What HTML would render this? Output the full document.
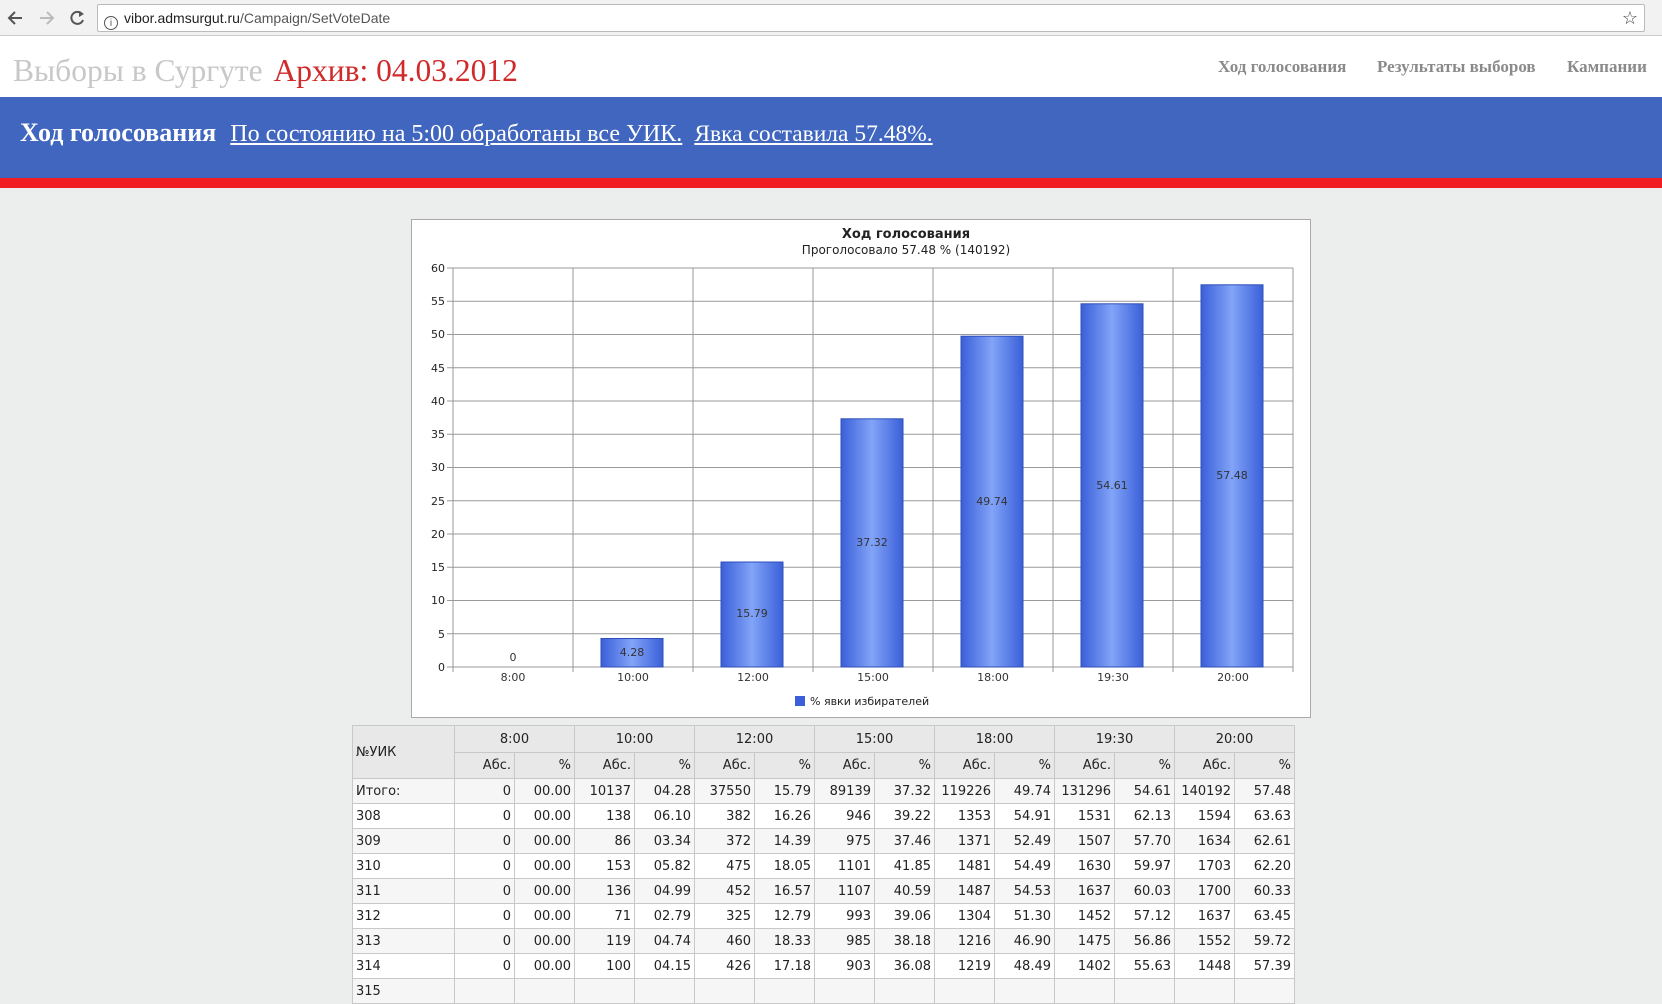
<!DOCTYPE html>
<html><head><meta charset="utf-8"><style>
body{margin:0;width:1662px;height:980px;overflow:hidden;background:#eceeee;font-family:"Liberation Sans",sans-serif;position:relative}
.bar{position:absolute;left:0;top:0;width:1662px;height:35px;background:#f2f2f2;border-bottom:1px solid #ccc}
.addr{position:absolute;left:97px;top:4px;width:1546px;height:26px;background:#fff;border:1px solid #bbb;border-radius:2px;font-size:14px;line-height:26px;color:#555}
.hdr{position:absolute;left:0;top:36px;width:1662px;height:61px;background:#fff}
.t1{position:absolute;left:13px;top:53px;font:31.5px "Liberation Serif",serif;color:#c8c8c8;white-space:nowrap}
.t1 span{color:#d02a2a;margin-left:3px}
.nav{position:absolute;top:57px;font:bold 17px "Liberation Serif",serif;color:#8a8a8a}
.blue{position:absolute;left:0;top:97px;width:1662px;height:81px;background:#4066c0}
.red{position:absolute;left:0;top:178px;width:1662px;height:10px;background:#f21d22}
.bt{position:absolute;left:20px;top:118px;color:#fff;font:24px "Liberation Serif",serif;white-space:nowrap}
.bt b{font-size:26px;margin-right:8px}
.bt u{margin-right:6px}
.chart{position:absolute;left:411px;top:219px;width:898px;height:497px;background:#fff;border:1px solid #aaa}
table{position:absolute;left:352px;top:725px;border-collapse:collapse;font:13px "DejaVu Sans",sans-serif;color:#222;table-layout:fixed}
td{border:1px solid #c8c8c8;height:24px;padding:0 3px;text-align:right;white-space:nowrap}
tr.h td{background:#e8e8e8;text-align:right;height:25px}
tr.h1 td{background:#e8e8e8;text-align:center;height:26px}
td.l{text-align:left}
tbody tr.r:nth-child(odd) td{background:#f6f6f6}
tbody tr.r:nth-child(even) td{background:#fff}
</style></head><body>
<div class="bar">
<svg style="position:absolute;left:6px;top:8px" width="80" height="20"><path d="M16 10H4M9 4 3 10 9 16" stroke="#555" stroke-width="2" fill="none"/><path d="M34 10H46M41 4 47 10 41 16" stroke="#bbb" stroke-width="2" fill="none"/><path d="M76 6A6 6 0 1 0 77 12" stroke="#555" stroke-width="2" fill="none"/><path d="M73 3 78 6 73 9Z" fill="#555"/></svg>
<div class="addr"><span style="display:inline-block;width:14px;height:14px;border:1.5px solid #555;border-radius:50%;margin:0 6px 0 6px;vertical-align:-3px;font-size:10px;line-height:14px;text-align:center;box-sizing:border-box">i</span><span style="color:#222">vibor.admsurgut.ru</span>/Campaign/SetVoteDate<span style="position:absolute;right:6px;top:0;font-size:18px;color:#444">☆</span></div>
</div>
<div class="hdr"></div>
<div class="t1">Выборы в Сургуте <span>Архив: 04.03.2012</span></div>
<div class="nav" style="left:1218px">Ход голосования</div>
<div class="nav" style="left:1377px">Результаты выборов</div>
<div class="nav" style="left:1567px">Кампании</div>
<div class="blue"></div><div class="red"></div>
<div class="bt"><b>Ход голосования</b> <u>По состоянию на 5:00 обработаны все УИК.</u> <u style="font-size:23.5px">Явка составила 57.48%.</u></div>
<div class="chart">
<svg width="898" height="497" style="position:absolute;left:0;top:0;font-family:'DejaVu Sans',sans-serif">
<defs><linearGradient id="g" x1="0" x2="1"><stop offset="0" stop-color="#3a5fd8"/><stop offset=".5" stop-color="#82a4f8"/><stop offset="1" stop-color="#3a5fd8"/></linearGradient></defs>
<g transform="translate(-411,-219)">
<text x="905" y="237" text-anchor="middle" font-size="13" font-weight="bold" fill="#222">Ход голосования</text>
<text x="905" y="253" text-anchor="middle" font-size="12" fill="#222">Проголосовало 57.48 % (140192)</text>
<g stroke="#999" stroke-width="1">
<path d="M452 267H1292M452 300.25H1292M452 333.5H1292M452 366.75H1292M452 400H1292M452 433.25H1292M452 466.5H1292M452 499.75H1292M452 533H1292M452 566.25H1292M452 599.5H1292M452 632.75H1292M446 666H1292"/>
<path d="M452 267V671M572 267V671M692 267V671M812 267V671M932 267V671M1052 267V671M1172 267V671M1292 267V671"/>
<path d="M446 267H452M446 300.25H452M446 333.5H452M446 366.75H452M446 400H452M446 433.25H452M446 466.5H452M446 499.75H452M446 533H452M446 566.25H452M446 599.5H452M446 632.75H452"/>
</g>
<g font-size="11" fill="#222" text-anchor="end">
<text x="444" y="271">60</text><text x="444" y="304">55</text><text x="444" y="337">50</text><text x="444" y="371">45</text><text x="444" y="404">40</text><text x="444" y="437">35</text><text x="444" y="470">30</text><text x="444" y="504">25</text><text x="444" y="537">20</text><text x="444" y="570">15</text><text x="444" y="603">10</text><text x="444" y="637">5</text><text x="444" y="670">0</text>
</g>
<g fill="url(#g)" stroke="#2f4fb8" stroke-width="1">
<rect x="600" y="637.5" width="62" height="28.5"/><rect x="720" y="561" width="62" height="105"/><rect x="840" y="417.8" width="62" height="248.2"/><rect x="960" y="335.2" width="62" height="330.8"/><rect x="1080" y="302.8" width="62" height="363.2"/><rect x="1200" y="283.8" width="62" height="382.2"/>
</g>
<g font-size="11" fill="#333" text-anchor="middle">
<text x="512" y="660">0</text><text x="631" y="655">4.28</text><text x="751" y="616">15.79</text><text x="871" y="545">37.32</text><text x="991" y="504">49.74</text><text x="1111" y="488">54.61</text><text x="1231" y="478">57.48</text>
<text x="512" y="680">8:00</text><text x="632" y="680">10:00</text><text x="752" y="680">12:00</text><text x="872" y="680">15:00</text><text x="992" y="680">18:00</text><text x="1112" y="680">19:30</text><text x="1232" y="680">20:00</text>
</g>
<rect x="794" y="695" width="10" height="10" fill="#3a5fd8"/>
<text x="809" y="704" font-size="11" fill="#222">% явки избирателей</text>
</g></svg>
</div>
<table>
<colgroup><col style="width:102px"><col span="14" style="width:60px"></colgroup>
<tr class="h1"><td rowspan="2" class="l" style="background:#e8e8e8;text-align:left">№УИК</td><td colspan="2">8:00</td><td colspan="2">10:00</td><td colspan="2">12:00</td><td colspan="2">15:00</td><td colspan="2">18:00</td><td colspan="2">19:30</td><td colspan="2">20:00</td></tr>
<tr class="h"><td>Абс.</td><td>%</td><td>Абс.</td><td>%</td><td>Абс.</td><td>%</td><td>Абс.</td><td>%</td><td>Абс.</td><td>%</td><td>Абс.</td><td>%</td><td>Абс.</td><td>%</td></tr>
<tr class="r"><td class="l">Итого:</td><td>0</td><td>00.00</td><td>10137</td><td>04.28</td><td>37550</td><td>15.79</td><td>89139</td><td>37.32</td><td>119226</td><td>49.74</td><td>131296</td><td>54.61</td><td>140192</td><td>57.48</td></tr>
<tr class="r"><td class="l">308</td><td>0</td><td>00.00</td><td>138</td><td>06.10</td><td>382</td><td>16.26</td><td>946</td><td>39.22</td><td>1353</td><td>54.91</td><td>1531</td><td>62.13</td><td>1594</td><td>63.63</td></tr>
<tr class="r"><td class="l">309</td><td>0</td><td>00.00</td><td>86</td><td>03.34</td><td>372</td><td>14.39</td><td>975</td><td>37.46</td><td>1371</td><td>52.49</td><td>1507</td><td>57.70</td><td>1634</td><td>62.61</td></tr>
<tr class="r"><td class="l">310</td><td>0</td><td>00.00</td><td>153</td><td>05.82</td><td>475</td><td>18.05</td><td>1101</td><td>41.85</td><td>1481</td><td>54.49</td><td>1630</td><td>59.97</td><td>1703</td><td>62.20</td></tr>
<tr class="r"><td class="l">311</td><td>0</td><td>00.00</td><td>136</td><td>04.99</td><td>452</td><td>16.57</td><td>1107</td><td>40.59</td><td>1487</td><td>54.53</td><td>1637</td><td>60.03</td><td>1700</td><td>60.33</td></tr>
<tr class="r"><td class="l">312</td><td>0</td><td>00.00</td><td>71</td><td>02.79</td><td>325</td><td>12.79</td><td>993</td><td>39.06</td><td>1304</td><td>51.30</td><td>1452</td><td>57.12</td><td>1637</td><td>63.45</td></tr>
<tr class="r"><td class="l">313</td><td>0</td><td>00.00</td><td>119</td><td>04.74</td><td>460</td><td>18.33</td><td>985</td><td>38.18</td><td>1216</td><td>46.90</td><td>1475</td><td>56.86</td><td>1552</td><td>59.72</td></tr>
<tr class="r"><td class="l">314</td><td>0</td><td>00.00</td><td>100</td><td>04.15</td><td>426</td><td>17.18</td><td>903</td><td>36.08</td><td>1219</td><td>48.49</td><td>1402</td><td>55.63</td><td>1448</td><td>57.39</td></tr>
<tr class="r"><td class="l">315</td><td></td><td></td><td></td><td></td><td></td><td></td><td></td><td></td><td></td><td></td><td></td><td></td><td></td><td></td></tr>
</table>
</body></html>
